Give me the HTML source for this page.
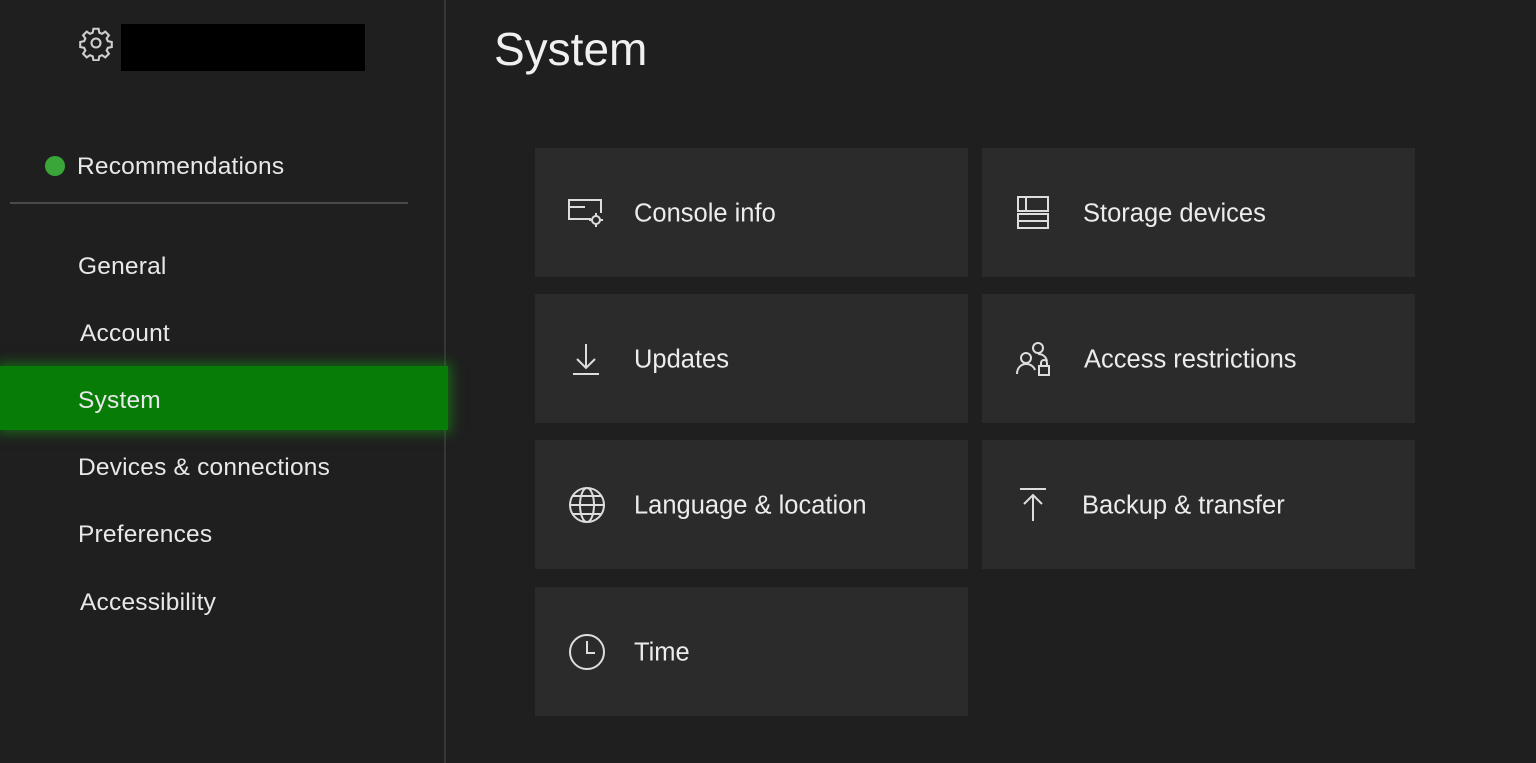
<!DOCTYPE html>
<html><head><style>
*{margin:0;padding:0;box-sizing:border-box}
body{width:1536px;height:763px;background:#1f1f1f;font-family:"Liberation Sans",sans-serif;color:#ececec;position:relative;overflow:hidden}
.side{position:absolute;left:0;top:0;width:446px;height:763px;background:#1f1f1f;border-right:2px solid #363636}
.nav{position:absolute;left:78px;font-size:24.5px;color:#e8e8e8;letter-spacing:0.2px}
.sel{position:absolute;left:0;top:366px;width:448px;height:64px;background:#077d08;box-shadow:0 0 12px 3px rgba(20,160,20,.55)}
.tile{position:absolute;width:433px;height:129px;background:#2b2b2b}
.tile span{position:absolute;left:99px;top:50%;transform:translateY(-46%);font-size:25.5px;color:#ececec}
.tile svg{position:absolute;left:32px;top:50%;transform:translateY(-50%)}
</style></head><body>
<div class="side">
<svg style="position:absolute;left:78px;top:25px" width="36" height="36" viewBox="0 0 24 24" fill="none" stroke="#cfcfcf" stroke-width="1.4"><circle cx="12" cy="12" r="3"/><path d="M10.3 2.5h3.4l.5 2.6 1.8.8 2.2-1.5 2.4 2.4-1.5 2.2.8 1.8 2.6.5v3.4l-2.6.5-.8 1.8 1.5 2.2-2.4 2.4-2.200-1.5-1.8.8-.5 2.6h-3.4l-.5-2.6-1.8-.8-2.2 1.5-2.4-2.4 1.5-2.2-.8-1.8-2.6-.5v-3.4l2.6-.5.8-1.8-1.5-2.2 2.4-2.4 2.2 1.5 1.8-.8z"/></svg>
<div style="position:absolute;left:121px;top:24px;width:244px;height:47px;background:#000"></div>
<div style="position:absolute;left:45px;top:156px;width:20px;height:20px;border-radius:50%;background:#3aa63a"></div>
<div class="nav" style="top:153px;left:77px">Recommendations</div>
<div style="position:absolute;left:10px;top:202px;width:398px;height:2px;background:#4a4a4a"></div>
<div class="nav" style="top:253px">General</div>
<div class="nav" style="top:320px;left:80px">Account</div>
</div>
<div class="sel"></div>
<div class="nav" style="top:387px">System</div>
<div class="nav" style="top:454px">Devices &amp; connections</div>
<div class="nav" style="top:521px">Preferences</div>
<div class="nav" style="top:589px;left:80px">Accessibility</div>
<div style="position:absolute;left:494px;top:22px;font-size:46px;color:#f0f0f0">System</div>

<div class="tile" style="left:535px;top:148px"><svg width="38" height="34" viewBox="0 0 38 34" fill="none" stroke="#ddd" stroke-width="2"><path d="M24 23H2V4h32v13"/><path d="M2 11h16"/><circle cx="29" cy="24" r="4"/><path d="M29 17v3M29 28v3M22 24h3M33 24h3"/></svg><span>Console info</span></div>
<div class="tile" style="left:982px;top:148px"><svg width="38" height="38" viewBox="0 0 38 38" fill="none" stroke="#ddd" stroke-width="2"><rect x="4" y="3" width="8" height="14"/><rect x="12" y="3" width="22" height="14"/><rect x="4" y="20" width="30" height="14"/><path d="M4 27h30"/></svg><span style="left:101px">Storage devices</span></div>
<div class="tile" style="left:535px;top:294px"><svg width="38" height="38" viewBox="0 0 38 38" fill="none" stroke="#ddd" stroke-width="2"><path d="M19 4v24M10 19l9 9 9-9M6 34h26"/></svg><span>Updates</span></div>
<div class="tile" style="left:982px;top:294px"><svg width="40" height="38" viewBox="0 0 40 38" fill="none" stroke="#ddd" stroke-width="2"><circle cx="24" cy="8" r="5"/><circle cx="12" cy="18" r="5"/><path d="M3 34c0-6 4-10 9-10s8 3 9 6M24 14c5 0 8 3 9 7"/><rect x="25" y="26" width="10" height="9"/><path d="M27 26v-3a3 3 0 0 1 6 0v3"/></svg><span style="left:102px">Access restrictions</span></div>
<div class="tile" style="left:535px;top:440px"><svg width="40" height="40" viewBox="0 0 40 40" fill="none" stroke="#ddd" stroke-width="2"><circle cx="20" cy="20" r="17"/><ellipse cx="20" cy="20" rx="7" ry="17"/><path d="M3 20h34M6 11h28M6 29h28"/></svg><span>Language &amp; location</span></div>
<div class="tile" style="left:982px;top:440px"><svg width="38" height="40" viewBox="0 0 38 40" fill="none" stroke="#ddd" stroke-width="2"><path d="M6 4h26M19 36V10M10 19l9-9 9 9"/></svg><span style="left:100px">Backup &amp; transfer</span></div>
<div class="tile" style="left:535px;top:587px"><svg width="40" height="40" viewBox="0 0 40 40" fill="none" stroke="#ddd" stroke-width="2"><circle cx="20" cy="20" r="17"/><path d="M20 9v12h8"/></svg><span>Time</span></div>
</body></html>
